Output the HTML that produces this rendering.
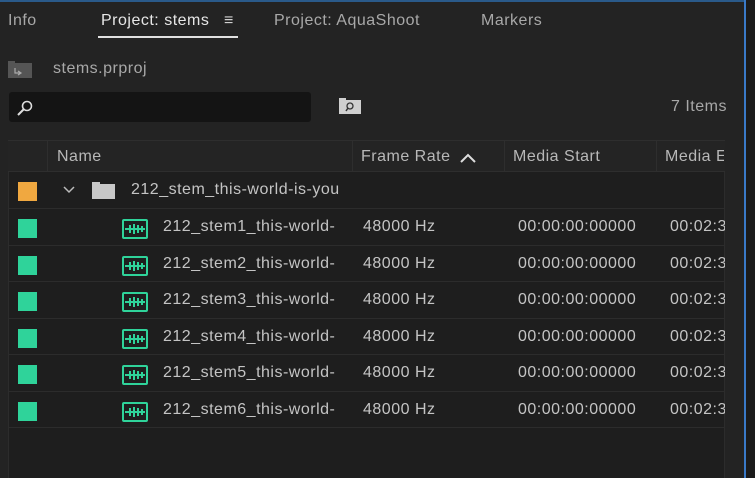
<!DOCTYPE html>
<html><head><style>
*{margin:0;padding:0;box-sizing:border-box}
body{width:755px;height:478px;background:#232323;font-family:"Liberation Sans",sans-serif;color:#c4c4c4;position:relative;overflow:hidden;font-size:16px;letter-spacing:0.5px}
.a{position:absolute;white-space:nowrap}
.row{position:absolute;left:8px;width:717px;height:37px;border-top:1px solid #2c2c2c}
.sq{position:absolute;left:10px;top:10px;width:19px;height:19px}
.t{position:absolute;top:9px;white-space:nowrap}
</style></head><body>
<div class="a" style="left:0;top:0;width:745px;height:2px;background:#2a5a8a"></div>
<div class="a" style="left:744px;top:0;width:2px;height:478px;background:#3a7ac8"></div>
<div class="a" style="left:746px;top:0;width:9px;height:478px;background:#1b1b1b"></div>
<div class="a" style="left:8px;top:12px;color:#a8a8a8">Info</div>
<div class="a" style="left:101px;top:12px;color:#e6e6e6">Project: stems</div>
<div class="a" style="left:224px;top:12px;color:#d0d0d0;font-size:16px">≡</div>
<div class="a" style="left:98px;top:36px;width:140px;height:2px;background:#e0e0e0"></div>
<div class="a" style="left:274px;top:12px;color:#a8a8a8">Project: AquaShoot</div>
<div class="a" style="left:481px;top:12px;color:#a8a8a8">Markers</div>
<svg class="a" style="left:7px;top:59px" width="26" height="20"><path d="M1 2h7v2H1z M1 4h24v15H1z" fill="#555"/><path d="M8 9v5h6 M11 12l3 2-3 2" stroke="#aaa" fill="none" stroke-width="1.2"/></svg>
<div class="a" style="left:53px;top:60px;color:#a8a8a8">stems.prproj</div>
<div class="a" style="left:9px;top:92px;width:302px;height:30px;background:#141414;border-radius:3px"></div>
<svg class="a" style="left:16px;top:99px" width="18" height="18"><circle cx="11" cy="7" r="4.5" stroke="#ddd" stroke-width="1.6" fill="none"/><path d="M8 10L2 16" stroke="#ddd" stroke-width="2"/></svg>
<svg class="a" style="left:338px;top:97px" width="24" height="20"><path d="M1 1h7v2H1z M1 3h22v14H1z" fill="#cfcfcf"/><circle cx="12" cy="9" r="3" stroke="#333" stroke-width="1.3" fill="none"/><path d="M10 11l-2 3" stroke="#333" stroke-width="1.5"/></svg>
<div class="a" style="left:671px;top:98px;color:#a8a8a8">7 Items</div>
<div class="a" style="left:8px;top:140px;width:717px;height:338px;background:#1e1e1e;border-left:1px solid #2c2c2c;border-right:1px solid #2c2c2c"></div>
<div class="a" style="left:8px;top:140px;width:717px;height:31px;background:#242424;border-top:1px solid #2e2e2e"></div>
<div class="a" style="left:47px;top:141px;width:1px;height:30px;background:#2e2e2e"></div>
<div class="a" style="left:352px;top:141px;width:1px;height:30px;background:#2e2e2e"></div>
<div class="a" style="left:504px;top:141px;width:1px;height:30px;background:#2e2e2e"></div>
<div class="a" style="left:656px;top:141px;width:1px;height:30px;background:#2e2e2e"></div>
<div class="a" style="left:57px;top:148px;color:#b8b8b8">Name</div>
<div class="a" style="left:361px;top:148px;color:#b8b8b8">Frame Rate</div>
<svg class="a" style="left:459px;top:152px" width="18" height="12"><path d="M2 10l7-7 7 7" stroke="#ddd" stroke-width="2" fill="none"/></svg>
<div class="a" style="left:513px;top:148px;color:#b8b8b8">Media Start</div>
<div class="a" style="left:665px;top:148px;color:#b8b8b8;width:59px;overflow:hidden">Media End</div>
<div class="row" style="top:171px;border-top:1px solid #2e2e2e"><div class="sq" style="background:#f0a840"></div>
<svg style="position:absolute;left:55px;top:14px" width="12" height="8"><path d="M1 1l5 5 5-5" stroke="#bbb" stroke-width="1.5" fill="none"/></svg>
<svg style="position:absolute;left:84px;top:9px" width="24" height="19"><path d="M0 1h8v2H0z M0 3h23v15H0z" fill="#c8c8c8"/></svg>
<div class="t" style="left:123px;color:#c4c4c4">212_stem_this-world-is-you</div></div>
<div id="rows"></div>
<script>
var h='';for(var i=0;i<6;i++){var y=208+i*36.6;h+='<div class="row" style="top:'+y+'px"><div class="sq" style="background:#2fd39a"></div><svg style="position:absolute;left:114px;top:10px" width="26" height="20"><rect x="1" y="1" width="24" height="18" rx="1" stroke="#2fd39a" stroke-width="2" fill="none"/><path d="M3 10h20 M8 6v8 M12 5v10 M16 6v8 M20 7v6" stroke="#2fd39a" stroke-width="2"/></svg><div class="t" style="left:155px">212_stem'+(i+1)+'_this-world-</div><div class="t" style="left:355px">48000 Hz</div><div class="t" style="left:510px">00:00:00:00000</div><div class="t" style="left:662px;width:55px;overflow:hidden">00:02:30</div></div>';}
h+='<div class="row" style="top:427px;height:1px"></div>';
document.getElementById('rows').innerHTML=h;
</script>
</body></html>
